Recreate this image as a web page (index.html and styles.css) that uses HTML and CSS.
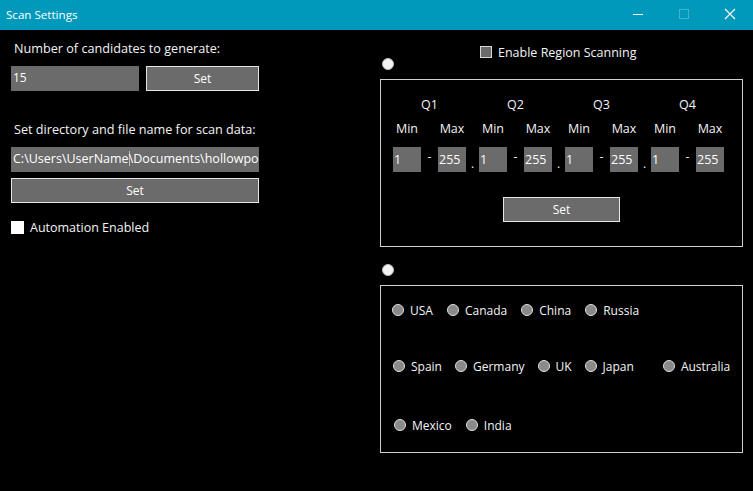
FILE: index.html
```html
<!DOCTYPE html>
<html>
<head>
<meta charset="utf-8">
<link rel="stylesheet" href="styles.css">
</head>
<body>
<div class="window">
  <header class="titlebar">
    <span class="title">Scan Settings</span>
    <div class="controls">
      <svg class="ctl ctl-min" width="46" height="30" viewBox="0 0 46 30"><path d="M18 14.5h10" stroke="#fff" stroke-width="1"/></svg>
      <svg class="ctl ctl-max" width="46" height="30" viewBox="0 0 46 30"><rect x="18.5" y="9.5" width="9" height="9" fill="none" stroke="#3fb3cf" stroke-width="1"/></svg>
      <svg class="ctl ctl-close" width="46" height="30" viewBox="0 0 46 30"><path d="M18 9l10 10M28 9l-10 10" stroke="#fff" stroke-width="1.1"/></svg>
    </div>
  </header>
  <main class="content">
    <section class="left">
      <div class="lbl lbl-first">Number of candidates to generate:</div>
      <div class="row">
        <div class="tb tb-num">15</div>
        <div class="btn btn-small">Set</div>
      </div>
      <div class="lbl lbl-second">Set directory and file name for scan data:</div>
      <div class="tb tb-path">C:\Users\UserName<span class="caret"></span>\Documents\hollowpo</div>
      <div class="btn btn-wide">Set</div>
      <div class="check">
        <span class="box box-white"></span>
        <span>Automation Enabled</span>
      </div>
    </section>
    <section class="right">
      <div class="check check-region">
        <span class="box box-gray"></span>
        <span>Enable Region Scanning</span>
      </div>
      <span class="radio-big radio-first"></span>
      <div class="panel panel-ip">
        <div class="quads">
          <div class="quad">
            <div class="q">Q1</div>
            <div class="mm mm-min">Min</div><div class="mm mm-max">Max</div>
            <div class="ib">1</div><div class="sep dash">-</div><div class="ib">255</div><div class="sep dot">.</div>
          </div>
          <div class="quad">
            <div class="q">Q2</div>
            <div class="mm mm-min">Min</div><div class="mm mm-max">Max</div>
            <div class="ib">1</div><div class="sep dash">-</div><div class="ib">255</div><div class="sep dot">.</div>
          </div>
          <div class="quad">
            <div class="q">Q3</div>
            <div class="mm mm-min">Min</div><div class="mm mm-max">Max</div>
            <div class="ib">1</div><div class="sep dash">-</div><div class="ib">255</div><div class="sep dot">.</div>
          </div>
          <div class="quad">
            <div class="q">Q4</div>
            <div class="mm mm-min">Min</div><div class="mm mm-max">Max</div>
            <div class="ib">1</div><div class="sep dash">-</div><div class="ib">255</div><div class="sep"></div>
          </div>
        </div>
        <div class="btn btn-ip">Set</div>
      </div>
      <span class="radio-big radio-second"></span>
      <div class="panel panel-countries">
        <div class="crow crow-1">
          <span class="opt"><span class="rd"></span>USA</span>
          <span class="opt"><span class="rd"></span>Canada</span>
          <span class="opt"><span class="rd"></span>China</span>
          <span class="opt"><span class="rd"></span>Russia</span>
        </div>
        <div class="crow crow-2">
          <span class="opt"><span class="rd"></span>Spain</span>
          <span class="opt"><span class="rd"></span>Germany</span>
          <span class="opt"><span class="rd"></span>UK</span>
          <span class="opt"><span class="rd"></span>Japan</span>
          <span class="opt opt-far"><span class="rd"></span>Australia</span>
        </div>
        <div class="crow crow-3">
          <span class="opt"><span class="rd"></span>Mexico</span>
          <span class="opt"><span class="rd"></span>India</span>
        </div>
      </div>
    </section>
  </main>
</div>
</body>
</html>
```
FILE: styles.css
```css
* { box-sizing: border-box; }
html, body { margin: 0; padding: 0; background: #000; }
body {
  font-family: "Open Sans", "Noto Sans", "Liberation Sans", sans-serif;
  font-size: 12px;
  color: #f4f4f4;
  width: 753px;
  height: 491px;
  overflow: hidden;
}
.window { width: 753px; height: 491px; background: #000; }

.titlebar {
  height: 30px;
  background: #0099bc;
  display: flex;
  align-items: center;
  justify-content: space-between;
}
.title { padding-left: 6px; font-size: 11.6px; color: #fff; line-height: 30px; }
.controls { display: flex; height: 30px; }
.ctl { display: block; }

.content {
  display: grid;
  grid-template-columns: 259px 363px;
  column-gap: 121px;
}

/* left column */
.left { padding-left: 11px; display: flex; flex-direction: column; }
.lbl { padding-left: 3px; line-height: 18px; font-size: 12.65px; white-space: nowrap; }
.lbl-first { margin-top: 9px; }
.lbl-second { margin-top: 29px; }
.row { display: flex; gap: 7px; margin-top: 9px; }
.tb {
  background: #6b6b6b;
  height: 25px;
  line-height: 23px;
  padding-left: 2px;
  color: #fff;
  font-size: 12px;
  white-space: nowrap;
  overflow: hidden;
}
.tb-num { width: 128px; }
.tb-path { width: 248px; margin-top: 9px; font-size: 12.5px; }
.caret { display: inline-block; width: 1px; height: 15px; background: #bbb; vertical-align: -3px; margin: 0 -1px 0 0; }
.btn {
  background: #6b6b6b;
  border: 1px solid #e6e6e6;
  height: 25px;
  line-height: 23px;
  text-align: center;
  color: #fff;
  font-size: 12px;
}
.btn-small { width: 113px; }
.btn-wide { width: 248px; margin-top: 6px; }

.check { display: flex; align-items: center; gap: 6px; height: 13px; font-size: 12.5px; }
.left .check { margin-top: 18px; }
.box { width: 13px; height: 13px; display: inline-block; flex: none; }
.box-white { background: #fff; }
.box-gray { background: #6b6b6b; border: 1px solid #d8d8d8; width: 12px; height: 12px; }

/* right column */
.right { display: flex; flex-direction: column; }
.check-region { margin-top: 16px; height: 12px; padding-left: 100px; }
.radio-big {
  display: block;
  width: 12px; height: 12px;
  border-radius: 50%;
  background: #f2f2f2;
  border: 1px solid #bdbdbd;
  margin-left: 2px;
}
.radio-first { margin-top: 0; }
.radio-second { margin-top: 17px; }
.panel { border: 1px solid #cfcfcf; width: 363px; height: 168px; margin-top: 9px; }

.quads { display: flex; padding-left: 12px; padding-top: 16px; }
.quad {
  display: grid;
  grid-template-columns: 28px 17px 28px 13px;
  grid-template-rows: 18px 24px 34px;
}
.q { grid-column: 1 / 4; text-align: center; line-height: 18px; font-size: 12.5px; }
.mm { line-height: 18px; text-align: center; margin-top: 6px; font-size: 12.5px; white-space: nowrap; }
.mm-min { grid-column: 1 / 2; }
.mm-max { grid-column: 3 / 4; }
.ib {
  grid-row: 3;
  margin-top: 9px;
  height: 25px;
  background: #6b6b6b;
  line-height: 25px;
  padding-left: 1px;
  font-size: 12.5px;
  color: #fff;
}
.sep { grid-row: 3; margin-top: 9px; height: 25px; text-align: center; font-size: 12px; }
.dash { line-height: 20px; }
.dot { line-height: 34px; }
.btn-ip { width: 117px; margin: 25px auto 0; }

.crow { display: flex; gap: 14px; height: 16px; align-items: center; }
.crow-1 { margin-top: 16px; padding-left: 11px; }
.crow-2 { margin-top: 40px; padding-left: 12px; gap: 13px; }
.crow-3 { margin-top: 43px; padding-left: 13px; }
.opt { display: flex; align-items: center; gap: 6px; font-size: 12px; white-space: nowrap; }
.opt-far { margin-left: 16px; }
.rd {
  width: 12px; height: 12px;
  border-radius: 50%;
  background: #8a8a8a;
  border: 1px solid #e0e0e0;
  flex: none;
}
```
